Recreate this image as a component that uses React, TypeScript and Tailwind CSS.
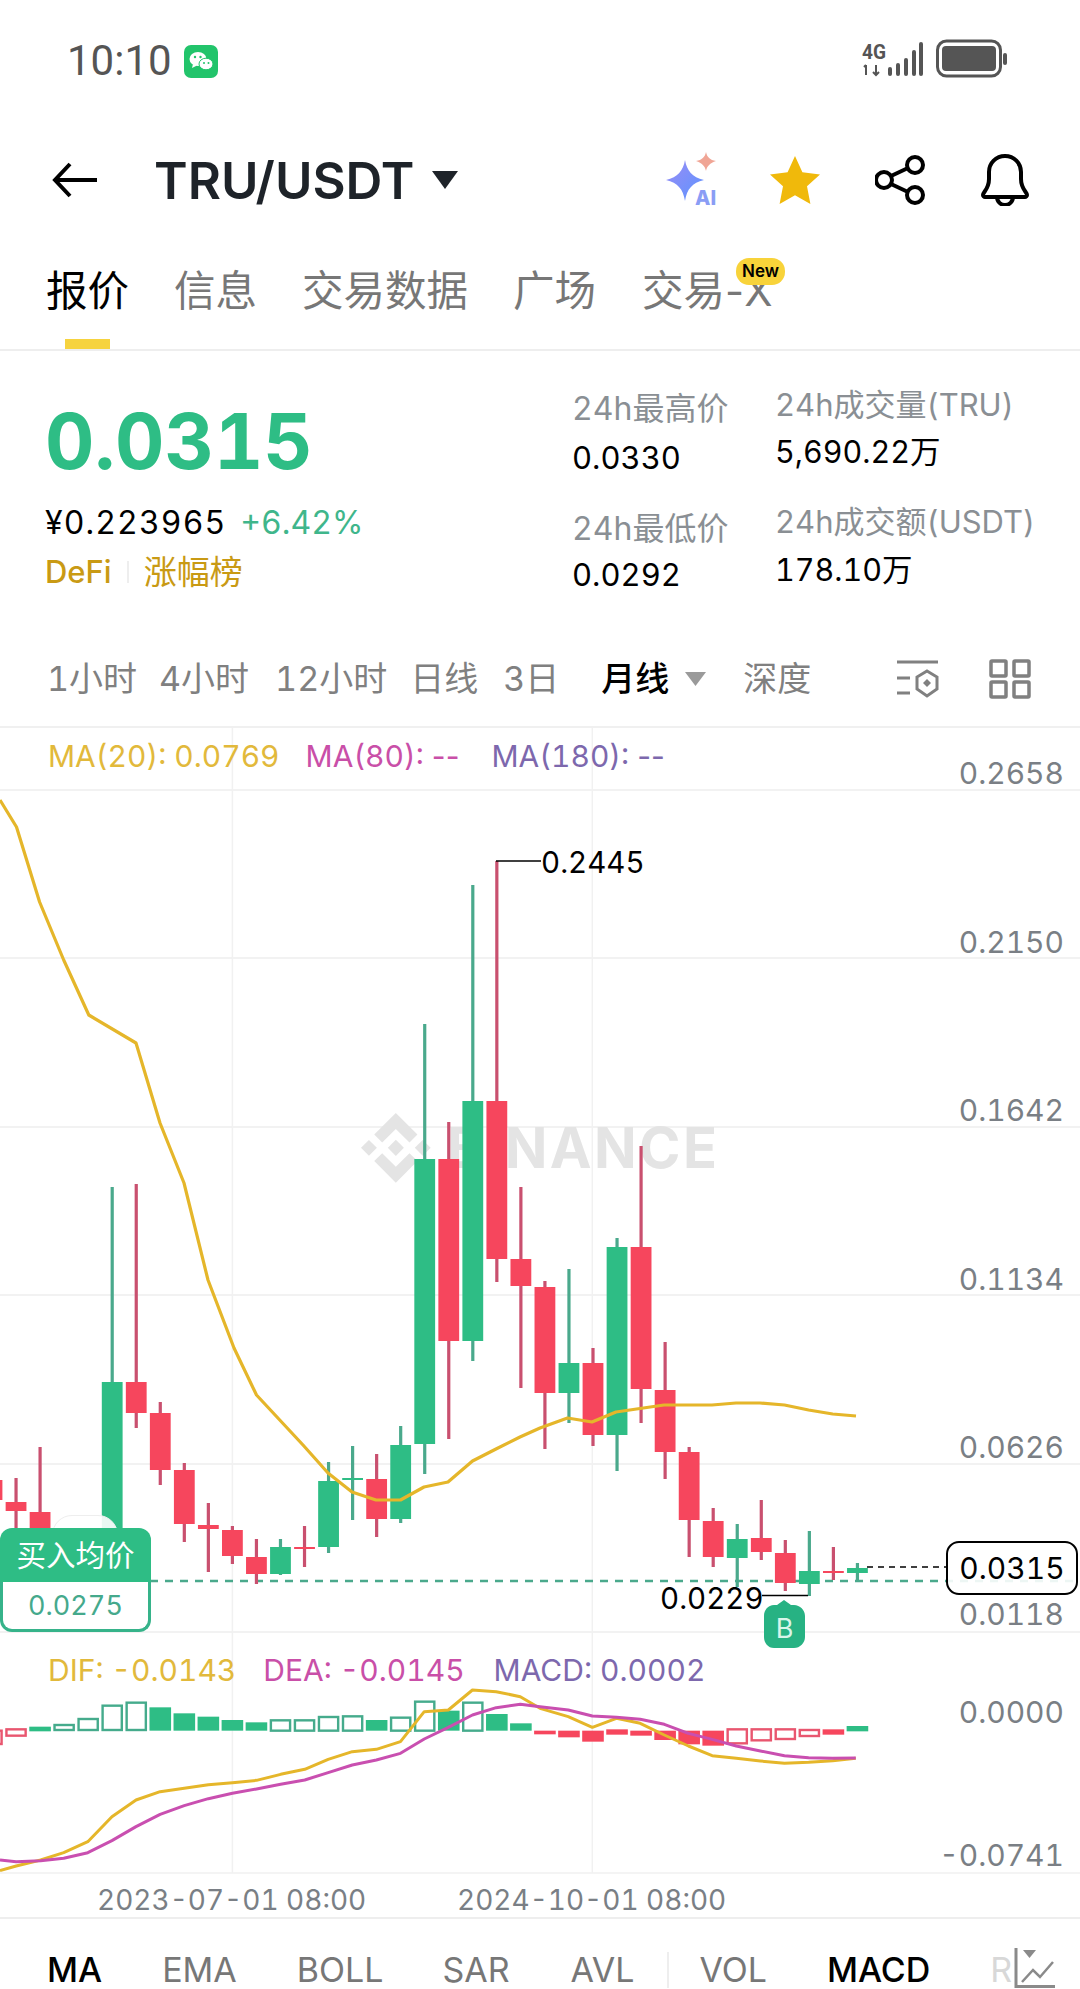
const GREEN = "#2ebd85";
const RED = "#f6465d";
const GREEN_WICK = "#4aa98c";
const RED_WICK = "#c9506f";

// x = 232.4 + 24.04 * (i - 10)
const cx = (i: number) => 232.4 + 24.04 * (i - 10);

// [index, up, wickTop, bodyTop, bodyBottom, wickBottom]
const candles: [number, boolean, number, number, number, number][] = [
  [0, false, 1463, 1480, 1500, 1500],
  [1, false, 1478, 1502, 1511, 1530],
  [2, false, 1447, 1512, 1545, 1545],
  [5, true, 1187, 1382, 1540, 1540],
  [6, false, 1184, 1382, 1413, 1428],
  [7, false, 1402, 1413, 1470, 1485],
  [8, false, 1463, 1470, 1524, 1542],
  [9, false, 1503, 1525, 1529, 1572],
  [10, false, 1526, 1530, 1556, 1564],
  [11, false, 1539, 1557, 1574, 1584],
  [12, true, 1539, 1547, 1574, 1575],
  [13, false, 1526, 1547, 1549, 1567],
  [14, true, 1462, 1481, 1547, 1553],
  [15, true, 1446, 1478, 1480, 1520],
  [16, false, 1454, 1479, 1519, 1537],
  [17, true, 1426, 1445, 1519, 1523],
  [18, true, 1024, 1159, 1444, 1474],
  [19, false, 1122, 1159, 1341, 1439],
  [20, true, 885, 1101, 1341, 1361],
  [21, false, 861, 1101, 1259, 1282],
  [22, false, 1187, 1259, 1286, 1388],
  [23, false, 1281, 1287, 1393, 1449],
  [24, true, 1269, 1363, 1393, 1423],
  [25, false, 1348, 1363, 1435, 1446],
  [26, true, 1238, 1247, 1435, 1471],
  [27, false, 1146, 1247, 1389, 1423],
  [28, false, 1342, 1390, 1452, 1479],
  [29, false, 1447, 1452, 1520, 1557],
  [30, false, 1508, 1521, 1557, 1567],
  [31, true, 1524, 1539, 1558, 1587],
  [32, false, 1500, 1538, 1552, 1560],
  [33, false, 1540, 1553, 1583, 1591],
  [34, true, 1531, 1571, 1584, 1596],
  [35, false, 1547, 1571, 1573, 1580],
  [36, true, 1563, 1568, 1573, 1580],
];

const maLine =
  "0,800 16.5,827 39.6,902 63.7,960 88.8,1015 136,1043 160,1123 184,1183 208,1280 234,1348 256.5,1395 303,1445 328,1473 352,1492 376,1500 400.5,1500 424,1487 448,1482 472.5,1461 496,1449 520,1437 540,1428 567.5,1418 592,1422 616,1412 664,1405 712,1405 736,1403 760,1403 784.5,1405 808.6,1410 832.7,1414 856,1416";

const toPts = (left: number[][], right: number[][]) =>
  [
    ...left.map(([x, y]) => `${x / 2.904},${1640 + y / 3}`),
    ...right.map(([x, y]) => `${540 + x / 2.904},${1640 + y / 3}`),
  ].join(" ");

const difLine = toPts(
  [[0,692],[47,678],[118,660],[185,638],[255,605],[325,530],[395,480],[465,455],[535,445],[605,434],[675,428],[745,421],[815,403],[885,388],[953,358],[1023,335],[1093,328],[1163,305],[1232,215],[1302,210],[1372,150],[1441,155],[1511,170]],
  [[0,205],[82,230],[152,262],[222,235],[291,250],[361,285],[431,318],[500,347],[570,355],[640,363],[710,370],[780,367],[850,362],[917,355]]
);
const deaLine = toPts(
  [[0,660],[47,665],[118,662],[185,655],[255,638],[325,602],[395,560],[465,523],[535,497],[605,476],[675,460],[745,447],[815,433],[885,420],[953,398],[1023,375],[1093,360],[1163,340],[1232,297],[1302,262],[1372,225],[1441,203],[1511,193]],
  [[0,200],[82,210],[152,228],[222,232],[291,238],[361,253],[431,280],[500,298],[570,318],[640,333],[710,347],[780,353],[850,355],[917,354]]
);

// [index, green, hollow, top, bottom] in zoomed px of the panel
const bars: [number, boolean, boolean, number, number][] = [
  [0, false, true, 272, 312],
  [1, false, true, 268, 287],
  [2, true, false, 260, 274],
  [3, true, true, 255, 270],
  [4, true, true, 237, 270],
  [5, true, true, 197, 270],
  [6, true, true, 188, 270],
  [7, true, false, 202, 272],
  [8, true, false, 220, 272],
  [9, true, false, 230, 272],
  [10, true, false, 240, 272],
  [11, true, false, 247, 272],
  [12, true, true, 241, 272],
  [13, true, true, 241, 272],
  [14, true, true, 231, 272],
  [15, true, true, 229, 272],
  [16, true, false, 240, 272],
  [17, true, true, 233, 272],
  [18, true, true, 185, 272],
  [19, true, false, 212, 272],
  [20, true, true, 188, 272],
  [21, true, false, 222, 272],
  [22, true, false, 250, 272],
  [23, false, false, 272, 283],
  [24, false, false, 272, 292],
  [25, false, false, 272, 305],
  [26, false, false, 268, 284],
  [27, false, false, 272, 287],
  [28, false, false, 272, 300],
  [29, false, false, 272, 313],
  [30, false, false, 272, 317],
  [31, false, true, 268, 310],
  [32, false, true, 268, 301],
  [33, false, true, 268, 297],
  [34, false, true, 270, 288],
  [35, false, false, 268, 284],
  [36, true, false, 258, 274],
];

const gridY = [790, 958, 1127, 1295, 1464, 1632];

const axisLabels = [
  { text: "0.2658", top: "top-[27px]" },
  { text: "0.2150", top: "top-[196px]" },
  { text: "0.1642", top: "top-[364px]" },
  { text: "0.1134", top: "top-[533px]" },
  { text: "0.0626", top: "top-[701px]" },
  { text: "0.0118", top: "top-[868px]" },
  { text: "0.0000", top: "top-[966px]" },
  { text: "-0.0741", top: "top-[1109px]" },
];

function StatusBar() {
  return (
    <div className="flex h-[120px] items-start pl-[67px] pr-[72px] pt-[41px]">
      <span className="text-[42px] leading-[40px] font-[Roboto,sans-serif] text-[#555555]">10:10</span>
      <svg className="ml-[12px] mt-[4px]" width="34" height="33" viewBox="0 0 34 33">
        <rect width="34" height="33" rx="7" fill="#22c46b" />
        <ellipse cx="14" cy="14" rx="8.5" ry="7" fill="#fff" />
        <path d="M9 19l-1 4 5-2.5z" fill="#fff" />
        <ellipse cx="22" cy="19" rx="7" ry="5.8" fill="#fff" stroke="#22c46b" strokeWidth="1" />
        <circle cx="11" cy="12" r="1.2" fill="#22c46b" />
        <circle cx="16.5" cy="12" r="1.2" fill="#22c46b" />
        <circle cx="20" cy="18" r="1" fill="#22c46b" />
        <circle cx="24.5" cy="18" r="1" fill="#22c46b" />
      </svg>
      <svg className="ml-auto -mt-[2px]" width="148" height="40" viewBox="860 40 148 40">
        <text x="862" y="60" fontSize="20" fontWeight="700" fill="#555" className="font-[Roboto,sans-serif]" textLength="24" lengthAdjust="spacingAndGlyphs">4G</text>
        <path d="M866 66v10M864 68l2-2M876 66v10M873 73l3 3 3-3" stroke="#555" strokeWidth="2" fill="none" />
        <rect x="888" y="68" width="4" height="9" rx="2" fill="#555" />
        <rect x="896" y="64" width="4" height="13" rx="2" fill="#555" />
        <rect x="904" y="59" width="4" height="18" rx="2" fill="#555" />
        <rect x="912" y="51" width="4" height="26" rx="2" fill="#555" />
        <rect x="919" y="43" width="4" height="34" rx="2" fill="#555" />
        <rect x="937.5" y="42" width="63" height="35" rx="9" fill="none" stroke="#555" strokeWidth="3" />
        <rect x="942" y="47" width="54" height="25" rx="4" fill="#555" />
        <rect x="1003" y="54" width="4" height="12" rx="2" fill="#555" />
      </svg>
    </div>
  );
}

function Header() {
  return (
    <div className="flex h-[120px] items-center pl-[52px] pr-[50px]">
      <svg width="46" height="36" viewBox="0 0 46 36" fill="none" stroke="#000" strokeWidth="4">
        <path d="M45 18H3" />
        <path d="M18 2 3 18l15 16" />
      </svg>
      <span className="ml-[56px] text-[51px] leading-none font-semibold text-[#1e2329]">TRU/USDT</span>
      <svg className="ml-[17px]" width="26" height="18" viewBox="0 0 26 18">
        <path d="M0 0h26L13 18z" fill="#1e2329" />
      </svg>
      <div className="ml-auto flex items-center">
        <svg width="56" height="54" viewBox="665 155 56 54" className="overflow-visible">
          <defs>
            <linearGradient id="ai" x1="0" y1="0" x2="1" y2="1">
              <stop offset="0" stopColor="#9a8cf5" />
              <stop offset="1" stopColor="#5c94ff" />
            </linearGradient>
          </defs>
          <path d="M685 162c2 11 7 17 19 20-12 3-17 9-19 21-2-12-7-18-19-21 12-3 17-9 19-20z" fill="url(#ai)" />
          <path d="M706 154c1 5 4 8 10 9-6 2-9 5-10 10-1-5-4-8-10-10 6-1 9-4 10-9z" fill="#f0a595" />
          <text x="695" y="207" fontSize="20" fontWeight="800" fill="#8a9df5">AI</text>
        </svg>
        <svg className="ml-[49px]" width="50" height="48" viewBox="0 0 50 48">
          <path d="M25 0l7.4 16.3L50 18.4 37 30.3 40.4 48 25 39.2 9.6 48 13 30.3 0 18.4l17.6-2.1z" fill="#f0b90b" />
        </svg>
        <svg className="ml-[55px]" width="50" height="50" viewBox="0 0 50 50" fill="none" stroke="#000" strokeWidth="4">
          <circle cx="40" cy="10" r="8" />
          <circle cx="9" cy="25" r="8" />
          <circle cx="40" cy="40" r="8" />
          <path d="M16 21 33 13M16 29l17 8" />
        </svg>
        <svg className="ml-[55px]" width="50" height="52" viewBox="0 0 50 52" fill="none" stroke="#000" strokeWidth="4">
          <path d="M3 41c0-3 6-6 6-16V18C9 9 16 2 25 2s16 7 16 16v7c0 10 6 13 6 16 0 1-1 2-2 2H5c-1 0-2-1-2-2z" />
          <path d="M17 43c0 5 4 8 8 8s8-3 8-8" />
        </svg>
      </div>
    </div>
  );
}

function Tabs() {
  return (
    <div className="relative flex h-[111px] border-b-2 border-[#eeeeee] pl-[46px] pt-[27px] text-[41.5px] leading-[48px] text-[#777777] normal-nums">
      <span className="text-black">报价</span>
      <span className="ml-[45px]">信息</span>
      <span className="ml-[45px]">交易数据</span>
      <span className="ml-[45px]">广场</span>
      <span className="ml-[46px]">交易-X</span>
      <span className="absolute bottom-0 left-[65px] h-[10px] w-[45px] bg-[#f6d33f]" />
      <span className="absolute left-[736px] top-[18px] flex h-[27px] w-[49px] items-center justify-center rounded-[13px] bg-[#f8d33a] text-[17px] leading-none font-semibold text-black">New</span>
    </div>
  );
}

function Stats() {
  return (
    <div className="flex h-[289px]">
      <div className="ml-[45px] w-[527px] pt-[50px]">
        <div className="text-[76.5px] leading-[80px] font-bold text-[#2ebd85]">0.0315</div>
        <div className="mt-[22px] flex text-[32px] leading-[40px]">
          <span className="text-black tracking-[1.1px]">¥0.223965</span>
          <span className="ml-[14px] text-[#3fb68b]">+6.42%</span>
        </div>
        <div className="mt-[9px] flex items-center text-[31px] leading-[40px] font-medium text-[#c99a14]">
          <span>DeFi</span>
          <span className="ml-[15px] h-[22px] w-[2px] bg-[#eeeeee]" />
          <span className="ml-[15px] text-[33px] font-normal">涨幅榜</span>
        </div>
      </div>
      <div className="w-[203px] pt-[38px] text-[31px] leading-[40px]">
        <div className="text-[32px] text-[#8a8f94]">24h最高价</div>
        <div className="mt-[9px] text-black">0.0330</div>
        <div className="mt-[31px] text-[32px] text-[#8a8f94]">24h最低价</div>
        <div className="mt-[6px] text-black">0.0292</div>
      </div>
      <div className="pt-[34px] text-[31px] leading-[40px]">
        <div className="text-[#8a8f94]">24h成交量(TRU)</div>
        <div className="mt-[7px] text-[30.5px] text-black">5,690.22万</div>
        <div className="mt-[30px] text-[#8a8f94]">24h成交额(USDT)</div>
        <div className="mt-[8px] text-[30.5px] text-black">178.10万</div>
      </div>
    </div>
  );
}

function Intervals() {
  return (
    <div className="flex h-[88px] items-center border-b-2 border-[#f0f0f0] pb-[8px] pl-[47px] pr-[49px] text-[34px] leading-none text-[#808080]">
      <span>1小时</span>
      <span className="ml-[22px]">4小时</span>
      <span className="ml-[26px]">12小时</span>
      <span className="ml-[23px]">日线</span>
      <span className="ml-[25px]">3日</span>
      <span className="ml-[42px] font-medium text-black">月线</span>
      <svg className="ml-[16px]" width="21" height="14" viewBox="0 0 21 14">
        <path d="M0 0h21L10.5 14z" fill="#9a9a9a" />
      </svg>
      <span className="ml-[37px]">深度</span>
      <svg className="ml-auto" width="44" height="38" viewBox="0 0 44 38" fill="none" stroke="#808080" strokeWidth="3">
        <path d="M1 2h41M1 18h13M1 33h13" />
        <path d="M31 11l10 6v12l-10 7-10-7V17z" />
        <path d="M31 19l4 4-4 4-4-4z" fill="#808080" stroke="none" />
      </svg>
      <svg className="ml-[49px]" width="42" height="40" viewBox="0 0 42 40" fill="none" stroke="#808080" strokeWidth="3.5">
        <rect x="2" y="2" width="15" height="15" rx="1" />
        <rect x="25" y="2" width="15" height="15" rx="1" />
        <rect x="2" y="23" width="15" height="15" rx="1" />
        <rect x="25" y="23" width="15" height="15" rx="1" />
      </svg>
    </div>
  );
}

function ChartSvg() {
  return (
    <svg className="absolute inset-0" width="1080" height="1189" viewBox="0 728 1080 1189">
      {/* grid */}
      {gridY.map((y) => (
        <line key={y} x1="0" x2="1080" y1={y} y2={y} stroke="#eeeeee" strokeWidth="1.5" />
      ))}
      <line x1="232.4" x2="232.4" y1="728" y2="1873" stroke="#f1f1f1" strokeWidth="1.5" />
      <line x1="592.3" x2="592.3" y1="728" y2="1873" stroke="#f1f1f1" strokeWidth="1.5" />
      <line x1="0" x2="1080" y1="1873" y2="1873" stroke="#f1f1f1" strokeWidth="1.5" />

      {/* watermark */}
      <g transform="translate(361 1113) scale(0.555)" fill="#e4e4e4">
        <path d="M38.171 53.203 62.759 28.616l24.601 24.601 14.307-14.307L62.759 0 23.864 38.896l14.307 14.307zM0 62.759l14.307-14.307 14.307 14.307-14.307 14.307zM38.171 72.315l24.588 24.587 24.601-24.601 14.314 14.3-.007.007-38.908 38.909-38.895-38.895-.02-.02zM96.905 62.766l14.307-14.307 14.307 14.307-14.307 14.307zM77.271 62.752h.006L62.759 48.234 52.03 58.963l-1.232 1.233-2.543 2.542-.02.02.02.021 14.504 14.505 14.518-14.518.007-.007z" />
      </g>
      <text x="447" y="1168" fontSize="56" fontWeight="700" fill="#e4e4e4" textLength="270">BINANCE</text>

      {/* average buy price */}
      <line x1="150" x2="1080" y1="1581" y2="1581" stroke={GREEN_WICK} strokeWidth="2.5" strokeDasharray="8 7" />

      {/* candles */}
      {candles.map(([i, up, wt, bt, bb, wb]) => (
        <g key={i}>
          <rect x={cx(i) - 1.6} y={wt} width="3.2" height={wb - wt} fill={up ? GREEN_WICK : RED_WICK} />
          <rect x={cx(i) - 10.4} y={bt} width="20.8" height={bb - bt} fill={up ? GREEN : RED} />
        </g>
      ))}

      <polyline points={maLine} fill="none" stroke="#e5b62a" strokeWidth="3.2" strokeLinejoin="round" />

      {/* high, low and last price lines */}
      <path d="M496 861h45" stroke="#000" strokeWidth="1.5" fill="none" />
      <path d="M762 1595.5h46" stroke="#000" strokeWidth="1.5" fill="none" />
      <line x1="867" x2="946" y1="1567" y2="1567" stroke="#000" strokeWidth="1.5" strokeDasharray="6 5" />

      {/* B marker */}
      <path d="M784 1600l7 5h3c6 0 11 5 11 11v21c0 6-5 11-11 11h-20c-6 0-10-5-10-11v-21c0-6 4-11 10-11h3z" fill="#27b283" />

      {/* macd histogram */}
      {bars.map(([i, green, hollow, t, b]) => {
        const top = 1640 + t / 3;
        const h = (b - t) / 3;
        return hollow ? (
          <rect key={i} x={cx(i) - 9.6} y={top} width="19.2" height={h} fill="#fff" stroke={green ? "#45ab8c" : "#e9566f"} strokeWidth="2.4" />
        ) : (
          <rect key={i} x={cx(i) - 10.8} y={top} width="21.6" height={h} fill={green ? GREEN : RED} />
        );
      })}
      <polyline points={difLine} fill="none" stroke="#e5b62a" strokeWidth="3" strokeLinejoin="round" />
      <polyline points={deaLine} fill="none" stroke="#c94fb0" strokeWidth="3" strokeLinejoin="round" />
    </svg>
  );
}

function Chart() {
  return (
    <div className="relative h-[1189px] overflow-hidden text-[30px] leading-[36px]">
      <ChartSvg />

      <div className="absolute left-[48px] top-[10px] flex">
        <span className="text-[#e2b93b]">MA(20): 0.0769</span>
        <span className="ml-[26px] text-[#c94fa8]">MA(80): <span className="normal-nums">--</span></span>
        <span className="ml-[32px] text-[#7d68ad]">MA(180): <span className="normal-nums">--</span></span>
      </div>
      <div className="absolute left-[48px] top-[924px] flex">
        <span className="text-[#e2b93b]">DIF: -0.0143</span>
        <span className="ml-[27px] text-[#c94fa8]">DEA: -0.0145</span>
        <span className="ml-[29px] text-[#7d68ad]">MACD: 0.0002</span>
      </div>

      {axisLabels.map((l) => (
        <span key={l.text} className={`absolute right-[16px] text-[#7a7f85] ${l.top}`}>{l.text}</span>
      ))}

      <span className="absolute left-[541px] top-[116px] text-[29.5px] text-black">0.2445</span>
      <span className="absolute left-[660px] top-[852px] text-[29.5px] text-black">0.0229</span>
      <span className="absolute left-[764px] top-[880px] flex h-[40px] w-[41px] items-center justify-center text-[27px] leading-none text-[#d9f5ea]">B</span>

      <div className="absolute left-[946px] top-[813px] flex h-[54px] w-[132px] items-center justify-center rounded-[13px] border-2 border-black bg-white/90 text-black">
        0.0315
      </div>

      {/* average buy price tag */}
      <div className="absolute left-[52px] top-[787px] h-[24px] w-[66px] rounded-t-[20px] border border-[#eeeeee] bg-white/90" />
      <div className="absolute left-0 top-[800px] w-[151px]">
        <div className="flex h-[54px] items-center justify-center rounded-t-[12px] bg-[#2ebd85] text-[29.5px] text-white">买入均价</div>
        <div className="flex h-[50px] items-center justify-center rounded-b-[12px] border-[3px] border-t-0 border-[#36b38a] bg-white text-[27px] text-[#45a98c]">0.0275</div>
      </div>

      <div className="absolute left-[97px] top-[1156px] text-[28px] leading-[32px] text-[#7a7f85]">2023-07-01 08:00</div>
      <div className="absolute left-[457px] top-[1156px] text-[28px] leading-[32px] text-[#7a7f85]">2024-10-01 08:00</div>
    </div>
  );
}

function BottomTabs() {
  return (
    <div className="relative flex h-[72px] items-center overflow-hidden border-t-2 border-[#eeeeee] pl-[47px] pt-[32px] text-[34px] leading-none text-[#777777]">
      <span className="font-medium text-black">MA</span>
      <span className="ml-[60px]">EMA</span>
      <span className="ml-[60px]">BOLL</span>
      <span className="ml-[59px]">SAR</span>
      <span className="ml-[61px]">AVL</span>
      <span className="ml-[33px] h-[36px] w-[2px] bg-[#eeeeee]" />
      <span className="ml-[30px]">VOL</span>
      <span className="ml-[60px] font-medium text-black">MACD</span>
      <span className="ml-[60px] text-[#d8d8d8]">R</span>
      <svg className="absolute left-[1013px] top-[29px]" width="44" height="42" viewBox="1013 1948 44 42" fill="none">
        <path d="M1016 1948v38.5h39" stroke="#8a8a8a" strokeWidth="3" />
        <path d="M1022 1982l11-12 7 7 13-15" stroke="#8a8a8a" strokeWidth="2.5" />
        <path d="M1023 1950h13l-6.5 8z" fill="#8a8a8a" />
      </svg>
    </div>
  );
}

export default function App() {
  return (
    <div className="h-[1989px] w-[1080px] overflow-hidden bg-white font-[Inter,'Noto_Sans_CJK_SC',sans-serif] tabular-nums">
      <StatusBar />
      <Header />
      <Tabs />
      <Stats />
      <Intervals />
      <Chart />
      <BottomTabs />
    </div>
  );
}
